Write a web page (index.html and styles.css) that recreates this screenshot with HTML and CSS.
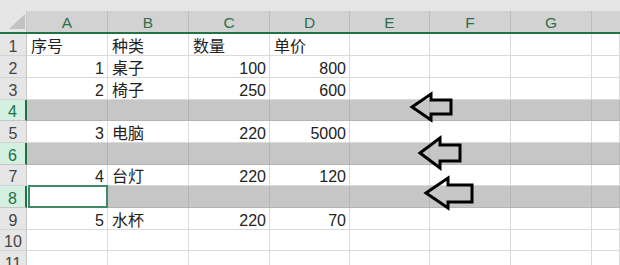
FILE: index.html
```html
<!DOCTYPE html>
<html>
<head>
<meta charset="utf-8">
<link rel="stylesheet" href="styles.css">
</head>
<body>
<div class="sheet">
  <div class="topstrip"></div>
  <div class="row colhead">
    <div class="corner"><svg class="tri" width="16" height="15" viewBox="0 0 16 15"><polygon points="16,0 16,15 0,15" fill="#c2c2c2"/></svg></div>
    <div class="ch">A</div><div class="ch">B</div><div class="ch">C</div><div class="ch">D</div><div class="ch">E</div><div class="ch">F</div><div class="ch">G</div><div class="ch last"></div>
  </div>
  <div class="row h22">
    <div class="rh">1</div>
    <div class="c">序号</div><div class="c">种类</div><div class="c">数量</div><div class="c">单价</div><div class="c"></div><div class="c"></div><div class="c"></div><div class="c"></div>
  </div>
  <div class="row h22">
    <div class="rh">2</div>
    <div class="c r">1</div><div class="c">桌子</div><div class="c r">100</div><div class="c r">800</div><div class="c"></div><div class="c"></div><div class="c"></div><div class="c"></div>
  </div>
  <div class="row h22">
    <div class="rh">3</div>
    <div class="c r">2</div><div class="c">椅子</div><div class="c r">250</div><div class="c r">600</div><div class="c"></div><div class="c"></div><div class="c"></div><div class="c"></div>
  </div>
  <div class="row h21 sel">
    <div class="rh">4</div>
    <div class="c"></div><div class="c"></div><div class="c"></div><div class="c"></div><div class="c"></div><div class="c"></div><div class="c"></div><div class="c"></div>
  </div>
  <div class="row h22">
    <div class="rh">5</div>
    <div class="c r">3</div><div class="c">电脑</div><div class="c r">220</div><div class="c r">5000</div><div class="c"></div><div class="c"></div><div class="c"></div><div class="c"></div>
  </div>
  <div class="row h22 sel">
    <div class="rh">6</div>
    <div class="c"></div><div class="c"></div><div class="c"></div><div class="c"></div><div class="c"></div><div class="c"></div><div class="c"></div><div class="c"></div>
  </div>
  <div class="row h21">
    <div class="rh">7</div>
    <div class="c r">4</div><div class="c">台灯</div><div class="c r">220</div><div class="c r">120</div><div class="c"></div><div class="c"></div><div class="c"></div><div class="c"></div>
  </div>
  <div class="row h22 sel">
    <div class="rh">8</div>
    <div class="c active"></div><div class="c"></div><div class="c"></div><div class="c"></div><div class="c"></div><div class="c"></div><div class="c"></div><div class="c"></div>
  </div>
  <div class="row h22">
    <div class="rh">9</div>
    <div class="c r">5</div><div class="c">水杯</div><div class="c r">220</div><div class="c r">70</div><div class="c"></div><div class="c"></div><div class="c"></div><div class="c"></div>
  </div>
  <div class="row h21">
    <div class="rh">10</div>
    <div class="c"></div><div class="c"></div><div class="c"></div><div class="c"></div><div class="c"></div><div class="c"></div><div class="c"></div><div class="c"></div>
  </div>
  <div class="row h22">
    <div class="rh">11</div>
    <div class="c"></div><div class="c"></div><div class="c"></div><div class="c"></div><div class="c"></div><div class="c"></div><div class="c"></div><div class="c"></div>
  </div>
  <svg class="arrows" width="620" height="265" viewBox="0 0 620 265">
    <g fill="none" stroke="#000" stroke-width="3" stroke-linejoin="miter">
      <polygon points="412,107 431,94 431,100 451,100 451,114 431,114 431,120"/>
      <polygon points="420,153 440,138 440,145 460,145 460,161 440,161 440,168"/>
      <polygon points="426,193 448,178 448,185 472,185 472,202 448,202 448,208"/>
    </g>
  </svg>
</div>
</body>
</html>
```

FILE: styles.css
```css
html, body {
  margin: 0;
  padding: 0;
  background: #ffffff;
}
body {
  width: 620px;
  height: 265px;
  overflow: hidden;
  font-family: "Liberation Sans", "Noto Sans CJK SC", sans-serif;
  font-size: 16px;
  color: #222222;
}
.sheet {
  position: relative;
  width: 620px;
  height: 265px;
  overflow: hidden;
}
.topstrip {
  height: 11px;
  background: #e6e6e6;
}
.row {
  display: grid;
  grid-template-columns: 27px 81px 81px 81px 80px 80px 81px 81px 1fr;
}
.h22 { height: 22px; }
.h21 { height: 21px; }
.colhead {
  height: 21px;
  border-bottom: 2px solid #217346;
  background: #d2d2d2;
}
.corner {
  background: #e6e6e6;
  border-right: 1px solid #c6c6c6;
  position: relative;
}
.tri {
  position: absolute;
  left: 9px;
  top: 3px;
}
.ch {
  border-right: 1px solid #bcbcbc;
  color: #2f6f4e;
  font-size: 15.5px;
  display: flex;
  align-items: flex-end;
  justify-content: center;
  line-height: 16px;
  padding-bottom: 1px;
}
.ch.last { border-right: none; }
.rh {
  background: #e6e6e6;
  border-right: 1px solid #c6c6c6;
  border-bottom: 1px solid #d4d4d4;
  color: #444444;
  display: flex;
  align-items: flex-end;
  justify-content: center;
  line-height: 16px;
}
.sel .rh {
  background: #d3f0e0;
  color: #217346;
  border-right: 2px solid #217346;
  border-bottom-color: #c6c6c6;
}
.c {
  border-right: 1px solid #dadada;
  border-bottom: 1px solid #dadada;
  display: flex;
  align-items: flex-end;
  line-height: 16px;
  padding: 0 3px 0 4px;
  white-space: nowrap;
  overflow: hidden;
}
.c.r { justify-content: flex-end; }
.sel .c {
  background: #c6c6c6;
  border-right-color: #b4b4b4;
  border-bottom-color: #b4b4b4;
}
.sel .c.active {
  background: #ffffff;
  border: 2px solid #3f8a64;
  margin: -1px 0 0 1px;
}
.arrows {
  position: absolute;
  left: 0;
  top: 0;
  pointer-events: none;
}
```
